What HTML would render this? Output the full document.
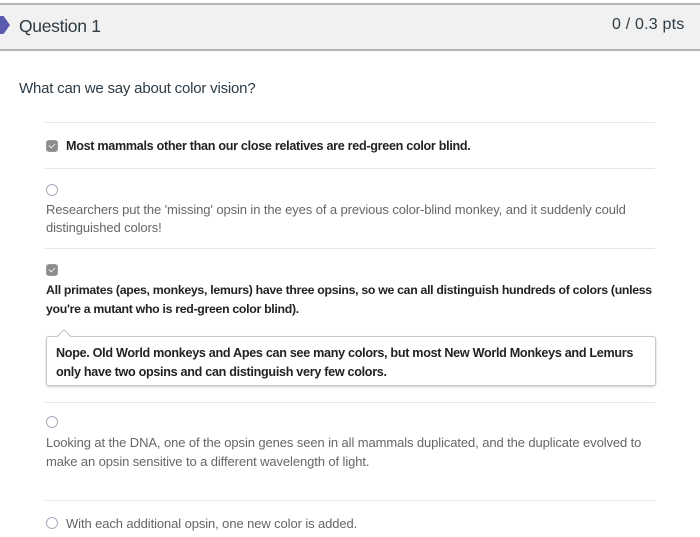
<!DOCTYPE html>
<html><head><style>
body{margin:0;width:700px;height:537px;background:#fff;font-family:"Liberation Sans",sans-serif;position:relative;overflow:hidden;color:#222}
.a{position:absolute;white-space:nowrap}
.hdr{position:absolute;left:0;top:3px;width:700px;height:44px;background:#f1f1f1;border-top:2px solid #b5b5b5;border-bottom:2px solid #b5b5b5}
.hr{position:absolute;left:45px;width:610px;height:1px;background:#e6e6e6}
.cb{position:absolute;width:10px;height:10px;border-radius:3px;background:#8b8b8b;border:1px solid #999}
.cb:after{content:"";position:absolute;left:3px;top:1px;width:3px;height:5px;border:solid #eee;border-width:0 1.5px 1.5px 0;transform:rotate(45deg)}
.rd{position:absolute;width:10px;height:10px;border-radius:50%;border:1px solid #aab;background:#fff}
.b{font-size:12.6px;font-weight:bold;color:#222;letter-spacing:-0.3px}
.g{font-size:13px;color:#666;letter-spacing:-0.1px}
</style></head><body>
<div class="hdr"></div>
<div class="a" style="left:-6px;top:16px;width:16px;height:18px;background:#5a5ab0;clip-path:polygon(0 0,60% 0,100% 50%,60% 100%,0 100%)"></div>
<div class="a" style="left:19px;top:16px;font-size:17.5px;color:#2d3b45;letter-spacing:-0.3px">Question 1</div>
<div class="a" style="left:612px;top:16px;font-size:16px;color:#2d3b45;letter-spacing:0.2px">0 / 0.3 pts</div>
<div class="a" style="left:19px;top:80px;font-size:15px;color:#2d3b45;letter-spacing:-0.2px">What can we say about color vision?</div>
<div class="hr" style="top:122px"></div>
<div class="cb" style="left:46px;top:140px"></div>
<div class="a b" style="left:66px;top:139px">Most mammals other than our close relatives are red-green color blind.</div>
<div class="hr" style="top:168px"></div>
<div class="rd" style="left:46px;top:184px"></div>
<div class="a g" style="left:46px;top:201px;line-height:18px">Researchers put the 'missing' opsin in the eyes of a previous color-blind monkey, and it suddenly could<br>distinguished colors!</div>
<div class="hr" style="top:248px"></div>
<div class="cb" style="left:46px;top:264px"></div>
<div class="a b" style="left:46px;top:281px;line-height:19px;font-size:12.3px">All primates (apes, monkeys, lemurs) have three opsins, so we can all distinguish hundreds of colors (unless<br>you're a mutant who is red-green color blind).</div>
<div class="a" style="left:46px;top:336px;width:608px;height:48px;border:1px solid #c8c8c8;border-radius:3px;box-shadow:0 1px 2px rgba(0,0,0,.2)"></div>
<div class="a" style="left:59px;top:331px;width:9px;height:9px;background:#fff;border-left:1px solid #c8c8c8;border-top:1px solid #c8c8c8;transform:rotate(45deg)"></div>
<div class="a b" style="left:56px;top:344px;line-height:19px">Nope. Old World monkeys and Apes can see many colors, but most New World Monkeys and Lemurs<br>only have two opsins and can distinguish very few colors.</div>
<div class="hr" style="top:402px"></div>
<div class="rd" style="left:46px;top:416px"></div>
<div class="a g" style="left:46px;top:433px;line-height:19px">Looking at the DNA, one of the opsin genes seen in all mammals duplicated, and the duplicate evolved to<br>make an opsin sensitive to a different wavelength of light.</div>
<div class="hr" style="top:500px"></div>
<div class="rd" style="left:46px;top:517px"></div>
<div class="a g" style="left:66px;top:516px;font-size:13px">With each additional opsin, one new color is added.</div>
</body></html>
